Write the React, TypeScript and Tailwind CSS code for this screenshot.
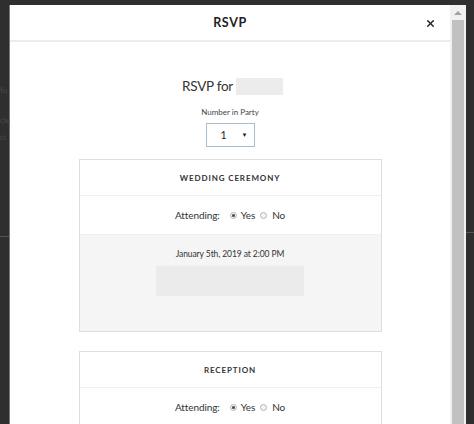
import { X } from "lucide-react";

const Radio = ({ checked }: { checked?: boolean }) => (
  <span className="inline-flex h-[7px] w-[7px] items-center justify-center rounded-full border border-[#b5b5b5] bg-[#f3f3f3]">
    {checked && <span className="h-[3px] w-[3px] rounded-full bg-[#444]" />}
  </span>
);

const Attending = () => (
  <div className="flex items-center justify-center text-[10px] tracking-[-0.01em] text-[#333]">
    <span className="mr-[10px]">Attending:</span>
    <Radio checked />
    <span className="ml-[4px] mr-[5px]">Yes</span>
    <Radio />
    <span className="ml-[5px]">No</span>
  </div>
);

const EventCard = ({ title, children }: { title: string; children?: React.ReactNode }) => (
  <div className="w-[303px] border border-[#dedede] bg-white">
    <div className="flex h-[36px] items-center justify-center border-b border-[#f0f0f0] text-[8px] font-bold tracking-[0.11em] text-[#333]">
      {title}
    </div>
    <div className="flex h-[38px] items-center justify-center">
      <Attending />
    </div>
    {children}
  </div>
);

export default function App() {
  return (
    <div
      className="relative flex h-[424px] w-[474px] overflow-hidden bg-[#2f2f2f] pl-[9px] pt-[5px]"
      style={{ fontFamily: "Lato, 'Open Sans', sans-serif" }}
    >
      {/* faint page text behind the overlay */}
      <div className="absolute left-0 top-[84px] text-[8px] text-[#4a4a4a]">fu</div>
      <div className="absolute left-0 top-[114px] text-[8px] text-[#4a4a4a]">cle</div>
      <div className="absolute left-0 top-[131px] text-[8px] text-[#4a4a4a]">ci</div>
      <div className="absolute left-0 top-[236px] h-px w-[9px] bg-[#555]" />
      <div className="absolute right-0 top-[232px] h-px w-[8px] bg-[#555]" />

      <div className="flex h-full border-l border-[#777]">
        <div className="flex w-[440px] flex-col bg-white">
          <div className="relative flex h-[37px] shrink-0 items-center justify-center border-b-2 border-[#ececec] pt-[1px]">
            <span className="text-[12.5px] font-bold tracking-[0.05em] text-[#222]">RSVP</span>
            <X className="absolute right-[14px] top-[13px] h-[11px] w-[11px] text-[#222]" strokeWidth={3.2} />
          </div>

          <div className="flex flex-col items-center pt-[34px]">
            <div className="flex items-center gap-[3px] pl-[5px]">
              <span className="text-[13.5px] tracking-[-0.02em] text-[#333]">RSVP for</span>
              <span className="h-[17px] w-[47px] bg-[#ececec]" />
            </div>
            <div className="mt-[10px] text-[8px] text-[#444]">Number in Party</div>
            <div className="mt-[5px] flex h-[24px] w-[49px] items-center justify-between border border-[#a9bccd] pl-[14px] pr-[6px] text-[10.5px] leading-none text-[#222]">
              <span>1</span>
              <span className="text-[6px] leading-none">▼</span>
            </div>

            <div className="mt-[12px]">
              <EventCard title="WEDDING CEREMONY">
                <div className="flex h-[97px] flex-col items-center border-t border-[#f0f0f0] bg-[#f5f5f5] pt-[13px]">
                  <div className="text-[8.5px] tracking-[-0.01em] text-[#333]">January 5th, 2019 at 2:00 PM</div>
                  <div className="mt-[5px] h-[30px] w-[148px] bg-[#ebebeb]" />
                </div>
              </EventCard>
            </div>

            <div className="mt-[19px]">
              <EventCard title="RECEPTION" />
            </div>
          </div>
        </div>

        <div className="flex w-[16px] flex-col items-center bg-[#f1f1f1]">
          <div className="mt-[6px] h-0 w-0 border-x-[4px] border-b-[4px] border-x-transparent border-b-[#a3a3a3]" />
          <div className="mt-[5px] w-[12px] flex-1 bg-[#c1c1c1]" />
        </div>
      </div>
    </div>
  );
}
